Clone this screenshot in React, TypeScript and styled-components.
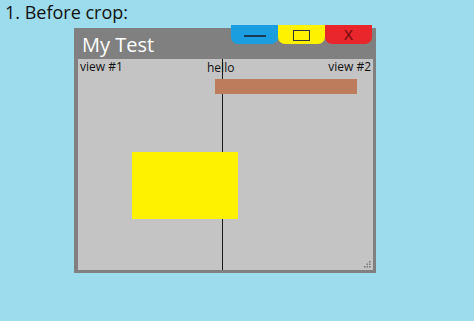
import styled, { createGlobalStyle } from 'styled-components';

const GlobalStyle = createGlobalStyle`
  html, body {
    margin: 0;
    padding: 0;
    background: #9ddcec;
    font-family: "Open Sans", "Noto Sans", sans-serif;
  }
`;

const Page = styled.div`
  width: 474px;
  height: 321px;
  overflow: hidden;
`;

const Heading = styled.div`
  font-size: 18px;
  line-height: 24px;
  color: #111;
  padding: 0 0 0 5px;
  height: 28px;
`;

const Window = styled.div`
  position: relative;
  margin-left: 74px;
  width: 302px;
  height: 245px;
  box-sizing: border-box;
  background: #808080;
  padding: 0 3px 3px 4px;
  display: flex;
  flex-direction: column;
`;

const TitleBar = styled.div`
  height: 31px;
  display: flex;
  align-items: center;
  color: #fff;
  font-size: 20px;
  padding-left: 4px;
  padding-top: 2px;
  box-sizing: border-box;
`;

const Controls = styled.div`
  position: absolute;
  top: -3px;
  right: 4px;
  display: flex;
`;

const ControlButton = styled.div<{ $bg: string }>`
  width: 47px;
  height: 19px;
  background: ${({ $bg }) => $bg};
  border-radius: 0 0 7px 7px;
  display: flex;
  align-items: center;
  justify-content: center;
  color: #6a0a0a;
  font-size: 14px;
  font-family: "Liberation Sans", Arial, sans-serif;
`;

const MinLine = styled.div`
  width: 22px;
  height: 2px;
  background: #1c3a55;
  margin-top: 3px;
`;

const MaxBox = styled.div`
  width: 15px;
  height: 9px;
  border: 1px solid #333;
  margin-top: 2px;
`;

const Content = styled.div`
  position: relative;
  flex: 1;
  background: #c4c4c4;
  display: grid;
  grid-template-columns: 145px 1fr;
  overflow: hidden;
`;

const View = styled.div<{ $align: 'left' | 'right'; $divider?: boolean }>`
  text-align: ${({ $align }) => $align};
  font-size: 12px;
  line-height: 16px;
  color: #111;
  padding: 0 2px;
  border-right: ${({ $divider }) => ($divider ? '1px solid #1a1a1a' : 'none')};
`;

const Label = styled.div`
  position: absolute;
  left: 129px;
  top: 1px;
  font-size: 12px;
  line-height: 16px;
  color: #111;
`;

const Bar = styled.div`
  position: absolute;
  left: 137px;
  top: 20px;
  width: 142px;
  height: 15px;
  background: #bd7c5b;
`;

const Block = styled.div`
  position: absolute;
  left: 54px;
  top: 93px;
  width: 106px;
  height: 67px;
  background: #fff200;
`;

const Grip = styled.svg`
  position: absolute;
  right: 2px;
  bottom: 2px;
`;

export default function App() {
  return (
    <Page>
      <GlobalStyle />
      <Heading>1. Before crop:</Heading>
      <Window>
        <TitleBar>My Test</TitleBar>
        <Controls>
          <ControlButton $bg="#1a9ee0">
            <MinLine />
          </ControlButton>
          <ControlButton $bg="#fff200">
            <MaxBox />
          </ControlButton>
          <ControlButton $bg="#e8262b">X</ControlButton>
        </Controls>
        <Content>
          <View $align="left" $divider>view #1</View>
          <View $align="right">view #2</View>
          <Label>hello</Label>
          <Bar />
          <Block />
          <Grip width="7" height="7" viewBox="0 0 7 7">
            <rect x="5" y="0" width="1.5" height="1.5" fill="#777" />
            <rect x="2.5" y="2.5" width="1.5" height="1.5" fill="#777" />
            <rect x="5" y="2.5" width="1.5" height="1.5" fill="#777" />
            <rect x="0" y="5" width="1.5" height="1.5" fill="#777" />
            <rect x="2.5" y="5" width="1.5" height="1.5" fill="#777" />
            <rect x="5" y="5" width="1.5" height="1.5" fill="#777" />
          </Grip>
        </Content>
      </Window>
    </Page>
  );
}
